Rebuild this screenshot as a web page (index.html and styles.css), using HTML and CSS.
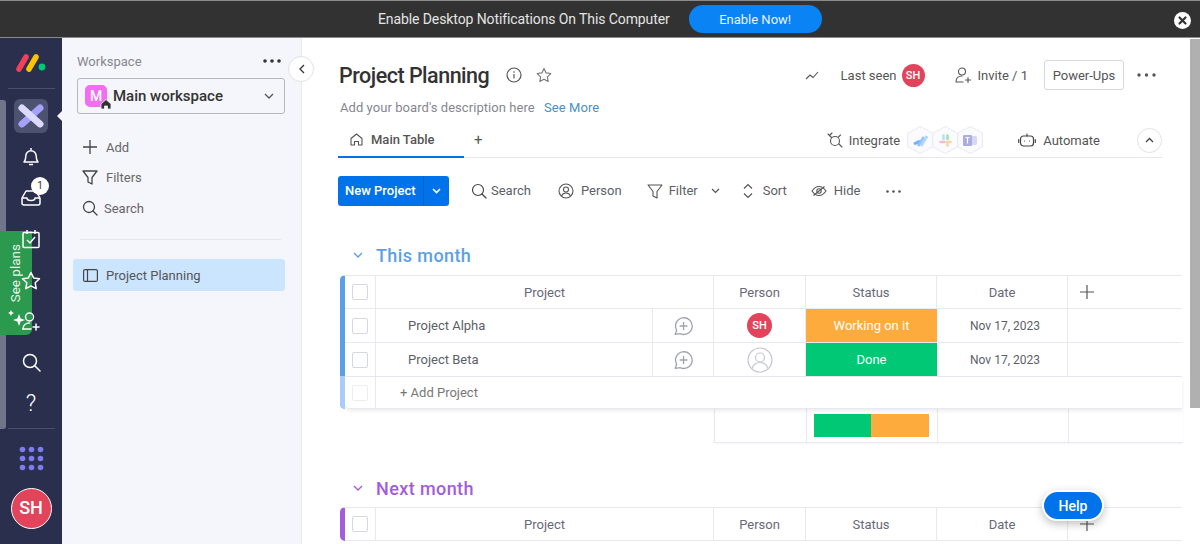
FILE: index.html
```html
<!DOCTYPE html>
<html lang="en">
<head>
    <meta charset="UTF-8">
    <meta name="viewport" content="width=device-width, initial-scale=1.0">
    <title>Project Planning</title>
    <link rel="stylesheet" href="styles.css">
</head>
<body>
    <div class="banner">
        <span class="banner-text">Enable Desktop Notifications On This Computer</span>
        <button class="banner-btn">Enable Now!</button>
        <span class="banner-close">
            <svg width="17" height="17" viewBox="0 0 17 17"><circle cx="8.5" cy="8.5" r="8.5" fill="#fff"/><path d="M5.5 5.5l6 6M11.5 5.5l-6 6" stroke="#333" stroke-width="2.2" stroke-linecap="round"/></svg>
        </span>
    </div>

    <div class="app">
        <!-- left rail -->
        <nav class="rail">
            <div class="rail-scroll"></div>
            <div class="see-plans">
                <span class="see-plans-text">See plans</span>
                <svg class="see-plans-spark" width="22" height="20" viewBox="0 0 22 20" fill="#fff"><path d="M12 5l1.600 4.400L18 11l-4.400 1.600L12 17l-1.600-4.400L6 11l4.400-1.600z"/><path d="M4 1l.9 2.100L7 4l-2.100.9L4 7l-.9-2.100L1 4l2.100-.9z"/></svg>
            </div>
            <svg class="rail-logo" width="30" height="18" viewBox="0 0 30 18">
                <path d="M3 15L10 3" stroke="#f2405b" stroke-width="5.500" stroke-linecap="round"/>
                <path d="M13 15L20 3" stroke="#fbc400" stroke-width="5.500" stroke-linecap="round"/>
                <circle cx="26" cy="13" r="3.400" fill="#00c875"/>
            </svg>
            <div class="rail-line"></div>
            <div class="rail-icons">
                <a class="rail-item rail-active">
                    <svg width="28" height="26" viewBox="0 0 28 26" fill="none" stroke-width="7" stroke-linecap="round"><path d="M23 5L5 21" stroke="#a5a2ff"/><path d="M5 5l18 16" stroke="#dcdbff"/></svg>
                </a>
                <a class="rail-item">
                    <svg width="18" height="20" viewBox="0 0 18 20" fill="none" stroke="#fff" stroke-width="1.500"><path d="M2 15c1.500-1.500 1.800-3 1.800-6a5.200 5.200 0 0 1 10.400 0c0 3 .3 4.500 1.800 6z" stroke-linejoin="round"/><path d="M7 17.500h4M9 1v2"/></svg>
                </a>
                <a class="rail-item">
                    <svg width="20" height="16" viewBox="0 0 20 16" fill="none" stroke="#fff" stroke-width="1.500" stroke-linejoin="round"><path d="M5 1h10l4 7v5a2 2 0 0 1-2 2H3a2 2 0 0 1-2-2V8z"/><path d="M1 8h5c0 1.500 1.500 2.500 4 2.500S14 9.500 14 8h5"/></svg>
                    <span class="rail-badge">1</span>
                </a>
                <a class="rail-item">
                    <svg width="20" height="20" viewBox="0 0 20 20" fill="none" stroke="#fff" stroke-width="1.500"><rect x="2" y="3.500" width="16" height="15" rx="1"/><path d="M6 1v4M14 1v4M6 11l3 3 5-6"/></svg>
                </a>
                <a class="rail-item">
                    <svg width="20" height="19" viewBox="0 0 20 19" fill="none" stroke="#fff" stroke-width="1.500" stroke-linejoin="round"><path d="M10 1.500l2.600 5.400 5.900.8-4.300 4.100 1 5.900-5.200-2.800-5.200 2.800 1-5.900L1.500 7.700l5.900-.8z"/></svg>
                </a>
                <a class="rail-item">
                    <svg width="20" height="20" viewBox="0 0 20 20" fill="none" stroke="#fff" stroke-width="1.500" stroke-linecap="round"><circle cx="8.500" cy="6" r="4"/><path d="M2 18c0-4 3-6 6.500-6"/><path d="M2 18h8M15 13v6M12 16h6"/></svg>
                </a>
                <a class="rail-item">
                    <svg width="19" height="19" viewBox="0 0 19 19" fill="none" stroke="#fff" stroke-width="1.500" stroke-linecap="round"><circle cx="8" cy="8" r="6.500"/><path d="M13 13l5 5"/></svg>
                </a>
                <a class="rail-item rail-help">?</a>
            </div>
            <div class="rail-line rail-line-low"></div>
            <svg class="rail-dots" width="25" height="25" viewBox="0 0 25 25" fill="#7e7bf0">
                <circle cx="3.500" cy="3.500" r="2.800"/><circle cx="12.500" cy="3.500" r="2.800"/><circle cx="21.500" cy="3.500" r="2.800"/>
                <circle cx="3.500" cy="12.500" r="2.800"/><circle cx="12.500" cy="12.500" r="2.800"/><circle cx="21.500" cy="12.500" r="2.800"/>
                <circle cx="3.500" cy="21.500" r="2.800"/><circle cx="12.500" cy="21.500" r="2.800"/><circle cx="21.500" cy="21.500" r="2.800"/>
            </svg>
            <div class="rail-avatar">SH</div>
        </nav>

        <!-- workspace sidebar -->
        <aside class="sidebar">
            <div class="side-head">
                <span>Workspace</span>
                <svg class="side-dots" width="18" height="4" viewBox="0 0 18 4" fill="#333"><circle cx="2" cy="2" r="1.800"/><circle cx="9" cy="2" r="1.800"/><circle cx="16" cy="2" r="1.800"/></svg>
            </div>
            <div class="ws-select">
                <span class="ws-logo">M
                    <svg class="ws-home" width="12" height="12" viewBox="0 0 12 12"><path d="M1 6L6 1.500 11 6v5H7.500V8h-3v3H1z" fill="#333" stroke="#f5f6fb" stroke-width=".8"/></svg>
                </span>
                <span class="ws-name">Main workspace</span>
                <svg width="10" height="6" viewBox="0 0 10 6" fill="none" stroke="#555" stroke-width="1.300"><path d="M1 1l4 4 4-4"/></svg>
            </div>
            <ul class="side-menu">
                <li>
                    <svg width="16" height="16" viewBox="0 0 16 16" fill="none" stroke="#444" stroke-width="1.300"><path d="M8 1v14M1 8h14"/></svg>
                    <span>Add</span>
                </li>
                <li>
                    <svg width="16" height="16" viewBox="0 0 16 16" fill="none" stroke="#444" stroke-width="1.300" stroke-linejoin="round"><path d="M1 2h14L10 8.500V15l-4-2V8.500z"/></svg>
                    <span>Filters</span>
                </li>
                <li class="side-search">
                    <svg width="16" height="16" viewBox="0 0 16 16" fill="none" stroke="#444" stroke-width="1.300" stroke-linecap="round"><circle cx="7" cy="7" r="5.500"/><path d="M11 11l4 4"/></svg>
                    <span>Search</span>
                </li>
            </ul>
            <div class="side-line"></div>
            <div class="side-board">
                <svg width="15" height="13" viewBox="0 0 15 13" fill="none" stroke="#444" stroke-width="1.200"><rect x=".6" y=".6" width="13.800" height="11.800" rx="1.500"/><path d="M4.500 1v11"/></svg>
                <span>Project Planning</span>
            </div>
        </aside>

        <main class="board">
            <div class="board-top">
                <div class="title-left">
                    <h1>Project Planning</h1>
                    <svg width="16" height="16" viewBox="0 0 16 16" fill="none" stroke="#555" stroke-width="1.200"><circle cx="8" cy="8" r="7"/><path d="M8 7v4.500M8 4.300v1.400"/></svg>
                    <svg class="title-star" width="16" height="16" viewBox="0 0 20 19" fill="none" stroke="#777" stroke-width="1.400" stroke-linejoin="round"><path d="M10 1.500l2.600 5.400 5.900.8-4.300 4.100 1 5.900-5.200-2.800-5.200 2.800 1-5.900L1.500 7.700l5.900-.8z"/></svg>
                </div>
                <div class="title-right">
                    <svg class="trend" width="14" height="9" viewBox="0 0 14 9" fill="none" stroke="#555" stroke-width="1.100"><path d="M1 8l4-4 3 2.500L13 1"/></svg>
                    <span class="last-seen">Last seen</span>
                    <span class="avatar">SH</span>
                    <svg class="invite-icon" width="16" height="16" viewBox="0 0 16 16" fill="none" stroke="#555" stroke-width="1.100" stroke-linecap="round"><circle cx="7" cy="4.500" r="3.500"/><path d="M1 15c0-4 2.500-6 6-6M1 15h7M13 10.500v5M10.500 13h5"/></svg>
                    <span class="invite">Invite / 1</span>
                    <button class="power-ups">Power-Ups</button>
                    <svg class="more-dots" width="19" height="4" viewBox="0 0 19 4" fill="#555"><circle cx="2" cy="2" r="1.700"/><circle cx="9.500" cy="2" r="1.700"/><circle cx="17" cy="2" r="1.700"/></svg>
                </div>
            </div>
            <p class="desc">Add your board's description here <a>See More</a></p>

            <div class="tabs">
                <div class="tab-active">
                    <svg width="13" height="13" viewBox="0 0 13 13" fill="none" stroke="#555" stroke-width="1.100" stroke-linejoin="round"><path d="M1 5.500L6.500 1 12 5.500V12H8.500V8.500h-4V12H1z"/></svg>
                    <span>Main Table</span>
                </div>
                <span class="tab-add">+</span>
                <div class="tabs-right">
                    <svg width="16" height="16" viewBox="0 0 16 16" fill="none" stroke="#555" stroke-width="1.100" stroke-linecap="round"><circle cx="8" cy="9" r="4.500"/><path d="M1 2l3.500 3.500M5 1L3 3M12 12l3 3M11.500 5l2-2"/></svg>
                    <span class="integrate">Integrate</span>
                    <div class="hexes">
                        <span class="hex">
                            <svg width="15" height="15" viewBox="0 0 15 15" fill="none" stroke-width="3"><path d="M1 11l6-3" stroke="#2684ff"/><path d="M5 13l6-9" stroke="#5aa4ff"/><path d="M8 13l6-10" stroke="#8cc0ff"/></svg>
                        </span>
                        <span class="hex">
                            <svg width="13" height="13" viewBox="0 0 13 13" stroke-width="2.600" stroke-linecap="round"><path d="M4.500 1.500v3.500" stroke="#8ed3ee"/><path d="M8.500 1.500v3.500" stroke="#6fcf97"/><path d="M1.500 8h4" stroke="#ef9ab5"/><path d="M8.500 8h3" stroke="#efc46f"/><path d="M8.500 8v3.500" stroke="#efc46f"/></svg>
                        </span>
                        <span class="hex">
                            <svg width="15" height="13" viewBox="0 0 15 13"><rect x="6" y="2" width="8" height="9" rx="1.500" fill="#c3c7ee"/><rect x="0" y="1" width="9" height="11" rx="1" fill="#7f84cc"/><path d="M2.500 3.500h4M4.500 3.500v6" stroke="#fff" stroke-width="1.200"/></svg>
                        </span>
                    </div>
                    <svg class="robot" width="18" height="14" viewBox="0 0 18 14" fill="none" stroke="#444" stroke-width="1.200" stroke-linecap="round"><rect x="2.500" y="3" width="13" height="10" rx="3"/><path d="M.7 6.500v3M17.300 6.500v3M9 1v2M6.500 8h.01M11.500 8h.01"/></svg>
                    <span class="automate">Automate</span>
                    <span class="collapse-up">
                        <svg width="9" height="6" viewBox="0 0 9 6" fill="none" stroke="#444" stroke-width="1.300"><path d="M1 5l3.500-3.500L8 5"/></svg>
                    </span>
                </div>
            </div>

            <div class="toolbar">
                <div class="new-btn">
                    <span class="new-label">New Project</span>
                    <span class="new-arrow">
                        <svg width="9" height="6" viewBox="0 0 9 6" fill="none" stroke="#fff" stroke-width="1.600"><path d="M1 1l3.500 3.500L8 1"/></svg>
                    </span>
                </div>
                <span class="tool tool-search">
                    <svg width="16" height="16" viewBox="0 0 16 16" fill="none" stroke="#444" stroke-width="1.200" stroke-linecap="round"><circle cx="7" cy="7" r="5.500"/><path d="M11 11l4 4"/></svg>
                    Search
                </span>
                <span class="tool tool-person">
                    <svg width="16" height="16" viewBox="0 0 16 16" fill="none" stroke="#555" stroke-width="1.100"><circle cx="8" cy="8" r="7"/><circle cx="8" cy="6.500" r="2.500"/><path d="M3.500 13c.8-2 2.500-3 4.500-3s3.700 1 4.500 3"/></svg>
                    Person
                </span>
                <span class="tool tool-filter">
                    <svg width="16" height="16" viewBox="0 0 16 16" fill="none" stroke="#555" stroke-width="1.100" stroke-linejoin="round"><path d="M1 2h14L10 8.500V15l-4-2V8.500z"/></svg>
                    Filter
                </span>
                <svg class="tool-chevron" width="9" height="6" viewBox="0 0 9 6" fill="none" stroke="#555" stroke-width="1.200"><path d="M1 1l3.500 3.500L8 1"/></svg>
                <span class="tool tool-sort">
                    <svg width="10" height="16" viewBox="0 0 10 16" fill="none" stroke="#555" stroke-width="1.200"><path d="M1 5.500L5 1.500l4 4M1 10.500l4 4 4-4"/></svg>
                    Sort
                </span>
                <span class="tool tool-hide">
                    <svg width="16" height="12" viewBox="0 0 16 12" fill="none" stroke="#555" stroke-width="1.100"><path d="M1 6c2-3 4.500-4.500 7-4.500S13 3 15 6c-2 3-4.500 4.500-7 4.500S3 9 1 6z"/><circle cx="8" cy="6" r="2.200"/><path d="M2.500 10.500l11-9"/></svg>
                    Hide
                </span>
                <svg class="tool-dots" width="15" height="3" viewBox="0 0 15 3" fill="#555"><circle cx="1.500" cy="1.500" r="1.300"/><circle cx="7.500" cy="1.500" r="1.300"/><circle cx="13.500" cy="1.500" r="1.300"/></svg>
            </div>

            <section class="group group-blue">
                <h2 class="group-title">
                    <svg width="10" height="6" viewBox="0 0 10 6" fill="none" stroke="currentColor" stroke-width="1.400"><path d="M1 1l4 4 4-4"/></svg>
                    <span>This month</span>
                </h2>
                <div class="table-box">
                    <div class="row row-head">
                        <div class="cell"><i class="check"></i></div>
                        <div class="cell cell-wide">Project</div>
                        <div class="cell">Person</div>
                        <div class="cell">Status</div>
                        <div class="cell">Date</div>
                        <div class="cell cell-plus"><svg width="14" height="14" viewBox="0 0 14 14" stroke="#555" stroke-width="1.200"><path d="M7 0v14M0 7h14"/></svg></div>
                    </div>
                    <div class="row">
                        <div class="cell"><i class="check"></i></div>
                        <div class="cell cell-name">Project Alpha</div>
                        <div class="cell"><svg width="20" height="20" viewBox="0 0 18 18" fill="none" stroke="#a0a4b0" stroke-width="1.200"><path d="M2 16.500l1.300-3.700A7.500 7.500 0 1 1 6.500 15.800z" stroke-linejoin="round"/><path d="M9.500 5.500v7M6 9h7"/></svg></div>
                        <div class="cell"><span class="avatar">SH</span></div>
                        <div class="cell cell-status status-work">Working on it</div>
                        <div class="cell cell-date">Nov 17, 2023</div>
                        <div class="cell"></div>
                    </div>
                    <div class="row">
                        <div class="cell"><i class="check"></i></div>
                        <div class="cell cell-name">Project Beta</div>
                        <div class="cell"><svg width="20" height="20" viewBox="0 0 18 18" fill="none" stroke="#a0a4b0" stroke-width="1.200"><path d="M2 16.500l1.300-3.700A7.500 7.500 0 1 1 6.500 15.800z" stroke-linejoin="round"/><path d="M9.500 5.500v7M6 9h7"/></svg></div>
                        <div class="cell"><svg width="26" height="26" viewBox="0 0 26 26" fill="none" stroke="#c5c7d0" stroke-width="1.200"><circle cx="13" cy="13" r="12"/><circle cx="13" cy="10.500" r="4.500"/><path d="M5 21.500c1.500-4 4.500-6 8-6s6.500 2 8 6"/></svg></div>
                        <div class="cell cell-status status-done">Done</div>
                        <div class="cell cell-date">Nov 17, 2023</div>
                        <div class="cell"></div>
                    </div>
                    <div class="row row-add">
                        <div class="cell"><i class="check check-faint"></i></div>
                        <div class="cell cell-add">+ Add Project</div>
                    </div>
                </div>
                <div class="summary">
                    <div class="cell"></div>
                    <div class="cell"><div class="battery"><span class="bat-done"></span><span class="bat-work"></span></div></div>
                    <div class="cell"></div>
                    <div class="cell"></div>
                </div>
            </section>

            <section class="group group-purple">
                <h2 class="group-title">
                    <svg width="10" height="6" viewBox="0 0 10 6" fill="none" stroke="currentColor" stroke-width="1.400"><path d="M1 1l4 4 4-4"/></svg>
                    <span>Next month</span>
                </h2>
                <div class="table-box">
                    <div class="row row-head">
                        <div class="cell"><i class="check"></i></div>
                        <div class="cell cell-wide">Project</div>
                        <div class="cell">Person</div>
                        <div class="cell">Status</div>
                        <div class="cell">Date</div>
                        <div class="cell cell-plus"><svg width="14" height="14" viewBox="0 0 14 14" stroke="#555" stroke-width="1.200"><path d="M7 0v14M0 7h14"/></svg></div>
                    </div>
                </div>
            </section>
        </main>
    </div>

    <!-- floating stuff -->
    <button class="collapse-side">
        <svg width="7" height="10" viewBox="0 0 7 10" fill="none" stroke="#333" stroke-width="1.300"><path d="M6 1L2 5l4 4"/></svg>
    </button>
    <button class="help">Help</button>
    <div class="page-scroll"></div>
</body>
</html>
```

FILE: styles.css
```css
* {
    box-sizing: border-box;
}

html, body {
    margin: 0;
    height: 100%;
    overflow: hidden;
}

body {
    display: flex;
    flex-direction: column;
    font-family: Roboto, "Liberation Sans", sans-serif;
    font-size: 13px;
    color: #555;
    background: #fff;
}

/* top banner */
.banner {
    position: relative;
    flex: 0 0 38px;
    display: flex;
    align-items: center;
    padding-left: 378px;
    background: #323232;
    border-top: 1px solid #8a8a8a;
    border-bottom: 1px solid #8a8a8a;
    color: #e4e4e4;
}

.banner-text {
    font-size: 14px;
    letter-spacing: -0.1px;
}

.banner-btn {
    margin-left: 19px;
    width: 133px;
    height: 28px;
    border: none;
    border-radius: 14px;
    background: #0a84f5;
    color: #e8f3ff;
    font-family: inherit;
    font-size: 13px;
}

.banner-close {
    position: absolute;
    top: 11px;
    right: 9px;
    line-height: 0;
}

.app {
    flex: 1;
    display: flex;
    min-height: 0;
}

/* left rail */
.rail {
    position: relative;
    flex: 0 0 62px;
    display: flex;
    flex-direction: column;
    align-items: center;
    background: #292f4c;
}

.rail-scroll {
    position: absolute;
    left: 0;
    top: 62px;
    width: 6px;
    height: 329px;
    border-radius: 0 3px 3px 0;
    background: #72758a;
}

.see-plans {
    position: absolute;
    left: 0;
    top: 193px;
    width: 32px;
    height: 104px;
    border-radius: 0 0 6px 0;
    background: #2b9a4f;
    color: #e6f5ea;
}

.see-plans-text {
    position: absolute;
    left: 7px;
    top: 13px;
    writing-mode: vertical-rl;
    transform: rotate(180deg);
    font-size: 13.500px;
}

.see-plans-spark {
    position: absolute;
    left: 7px;
    top: 78px;
}

.rail-logo {
    margin-top: 16px;
}

.rail-line {
    width: 47px;
    height: 1px;
    margin-top: 16px;
    background: #4a4f6b;
}

.rail-icons {
    position: relative;
    z-index: 1;
    display: flex;
    flex-direction: column;
    align-items: center;
    margin-top: 10px;
    gap: 7px;
}

.rail-item {
    position: relative;
    display: flex;
    align-items: center;
    justify-content: center;
    width: 34px;
    height: 34px;
    border-radius: 6px;
}

.rail-active {
    background: #4d5270;
}

.rail-active::after {
    content: "";
    position: absolute;
    left: 43px;
    top: 12px;
    border: 5px solid transparent;
    border-left: none;
    border-right-color: #f5f6fb;
}

.rail-badge {
    position: absolute;
    top: -4px;
    right: -1px;
    width: 18px;
    height: 18px;
    border-radius: 50%;
    background: #fff;
    color: #333;
    font-size: 10px;
    line-height: 18px;
    text-align: center;
}

.rail-help {
    color: #fff;
    font-size: 23px;
    font-weight: 300;
}

.rail-line-low {
    margin-top: 8px;
}

.rail-dots {
    margin-top: 17px;
}

.rail-avatar {
    width: 41px;
    height: 41px;
    margin-top: 17px;
    border: 1.500px solid #fff;
    border-radius: 50%;
    background: #e2445c;
    color: #fff;
    font-size: 18px;
    font-weight: 500;
    line-height: 38px;
    text-align: center;
}

/* workspace sidebar */
.sidebar {
    flex: 0 0 240px;
    padding: 14px 16px 0 11px;
    background: #f5f6fb;
    border-right: 1px solid #e6e9ef;
}

.side-head {
    display: flex;
    justify-content: space-between;
    align-items: center;
    height: 18px;
    padding-left: 4px;
    color: #85878f;
}

.side-dots {
    margin-right: 4px;
}

.ws-select {
    display: flex;
    align-items: center;
    height: 36px;
    margin: 8px 0 0 4px;
    padding: 0 10px 0 7px;
    border: 1px solid #b5b7bf;
    border-radius: 3px;
}

.ws-logo {
    position: relative;
    flex: 0 0 22px;
    height: 22px;
    border-radius: 5px;
    background: #f36df0;
    color: #fff;
    font-size: 14px;
    font-weight: 500;
    line-height: 22px;
    text-align: center;
}

.ws-home {
    position: absolute;
    right: -5px;
    bottom: -3px;
}

.ws-name {
    flex: 1;
    margin-left: 6px;
    color: #333;
    font-size: 15px;
    font-weight: 500;
    white-space: nowrap;
}

.side-menu {
    margin: 18px 0 0;
    padding: 0 0 0 9px;
    list-style: none;
}

.side-menu li {
    display: flex;
    align-items: center;
    gap: 8px;
    height: 30px;
    color: #666;
}

.side-menu .side-search {
    gap: 6px;
    margin-top: 1px;
}

.side-line {
    height: 1px;
    margin: 16px 4px 0 7px;
    background: #e4e6ec;
}

.side-board {
    display: flex;
    align-items: center;
    gap: 8px;
    height: 32px;
    margin-top: 19px;
    padding-left: 10px;
    border-radius: 3px;
    background: #cce5ff;
    color: #555;
}

/* board */
.board {
    flex: 1;
    min-width: 0;
    padding: 22px 0 0 36px;
}

.board-top {
    display: flex;
    justify-content: space-between;
    align-items: center;
    height: 30px;
    padding-right: 44px;
}

.title-left, .title-right {
    display: flex;
    align-items: center;
}

h1 {
    margin: 0 17px 0 1px;
    color: #333;
    font-size: 21.500px;
    font-weight: 500;
    letter-spacing: -0.500px;
}

.title-star {
    margin-left: 14px;
}

.trend {
    margin-right: 22px;
}

.last-seen {
    margin-right: 5px;
    font-size: 13px;
}

.avatar {
    display: inline-block;
    width: 23px;
    height: 23px;
    border-radius: 50%;
    background: #e2445c;
    color: #fff;
    font-size: 11px;
    font-weight: 500;
    line-height: 23px;
    text-align: center;
}

.row .avatar {
    width: 25px;
    height: 25px;
    line-height: 25px;
}

.invite-icon {
    margin-left: 30px;
}

.invite {
    margin-left: 7px;
}

.power-ups {
    width: 80px;
    height: 30px;
    margin-left: 16px;
    border: 1px solid #d5d7de;
    border-radius: 3px;
    background: #fff;
    color: #555;
    font-family: inherit;
    font-size: 13px;
}

.more-dots {
    margin-left: 13px;
}

.desc {
    margin: 9px 0 0 2px;
    color: #85878f;
    font-size: 13px;
    line-height: 17px;
    letter-spacing: 0.060px;
}

.desc a {
    margin-left: 6px;
    color: #4a8fc7;
}

.tabs {
    display: flex;
    align-items: center;
    height: 35px;
    margin: 7px 37px 0 0;
    border-bottom: 1px solid #e6e9ef;
}

.tab-active {
    display: flex;
    align-items: center;
    gap: 8px;
    align-self: stretch;
    width: 126px;
    margin-bottom: -1px;
    padding-left: 12px;
    border-bottom: 2px solid #0073ea;
    font-weight: 500;
}

.tab-add {
    margin-left: 10px;
    font-size: 15px;
}

.tabs-right {
    display: flex;
    align-items: center;
    margin-left: auto;
    padding-right: 1px;
}

.integrate {
    margin-left: 6px;
}

.hexes {
    display: flex;
    margin: 0 36px 0 7px;
}

.hex {
    position: relative;
    display: flex;
    align-items: center;
    justify-content: center;
    width: 26px;
    height: 28px;
    margin-right: -1px;
    background: #e8eaf2;
    clip-path: polygon(50% 0, 100% 25%, 100% 75%, 50% 100%, 0 75%, 0 25%);
}

.hex::before {
    content: "";
    position: absolute;
    inset: 1px;
    background: #fbfbfe;
    clip-path: polygon(50% 0, 100% 25%, 100% 75%, 50% 100%, 0 75%, 0 25%);
}

.hex svg {
    position: relative;
    opacity: 0.65;
}

.automate {
    margin-left: 7px;
}

.collapse-up {
    display: flex;
    align-items: center;
    justify-content: center;
    width: 25px;
    height: 25px;
    margin-left: 37px;
    border: 1px solid #e0e2e8;
    border-radius: 50%;
}

/* toolbar */
.toolbar {
    display: flex;
    align-items: center;
    height: 30px;
    margin-top: 18px;
}

.new-btn {
    display: flex;
    width: 111px;
    height: 30px;
    border-radius: 3px;
    background: #0073ea;
    color: #fff;
    line-height: 30px;
}

.new-label {
    width: 86px;
    padding-left: 7px;
    border-right: 1px solid #0060c0;
    font-weight: 500;
    white-space: nowrap;
}

.new-arrow {
    flex: 1;
    display: flex;
    align-items: center;
    justify-content: center;
}

.tool {
    display: flex;
    align-items: center;
    gap: 5px;
    padding-bottom: 1px;
    color: #5c5f68;
}

.tool-search {
    margin-left: 22px;
    gap: 4px;
}

.tool-person {
    margin-left: 27px;
    gap: 7px;
}

.tool-filter {
    margin-left: 25px;
    gap: 6px;
}

.tool-chevron {
    margin-left: 13px;
}

.tool-sort {
    margin-left: 23px;
    gap: 10px;
}

.tool-hide {
    margin-left: 24px;
    gap: 7px;
}

.tool-dots {
    margin-left: 25px;
}

/* groups */
.group {
    margin-left: 2px;
}

.group-blue {
    margin-top: 37px;
    color: #5b9fe8;
}

.group-purple {
    margin-top: 33px;
    color: #a25ddc;
}

.group-title {
    display: flex;
    align-items: center;
    gap: 13px;
    height: 24px;
    margin: 0 0 8px 13px;
    font-size: 18px;
    font-weight: 500;
    letter-spacing: 0.400px;
}

.group-purple .group-title {
    margin-bottom: 7px;
}

.table-box {
    width: 842px;
    border-left: 5px solid currentColor;
    border-top: 1px solid #e6e9ef;
    border-radius: 5px 0 0 5px;
}

.row {
    display: grid;
    grid-template-columns: 31px 277px 61px 92px 131px 131px 115px;
    height: 34px;
    border-bottom: 1px solid #e6e9ef;
    color: #5c5f68;
}

.row-head {
    height: 33px;
    color: #676879;
}

.row-add {
    height: 32px;
    box-shadow: 0 2px 4px rgba(0, 0, 0, 0.08);
    border-radius: 0 0 0 5px;
}

.cell {
    display: flex;
    align-items: center;
    justify-content: center;
    border-right: 1px solid #e6e9ef;
}

.cell:last-child {
    border-right: none;
}

.cell-wide {
    grid-column: span 2;
}

.cell-name {
    justify-content: flex-start;
    padding-left: 32px;
}

.cell-add {
    grid-column: span 6;
    justify-content: flex-start;
    padding-left: 24px;
    color: #777;
    border-right: none;
}

.cell-plus {
    justify-content: flex-start;
    padding-left: 12px;
}

.cell-status {
    color: #fff;
    border-right: none;
}

.status-work {
    background: #fdab3d;
}

.status-done {
    background: #00c875;
}

.cell-date {
    padding-left: 6px;
    font-size: 12px;
}

.check {
    display: block;
    width: 16px;
    height: 16px;
    border: 1px solid #d5d7de;
    border-radius: 2px;
}

.check-faint {
    border-color: #eceef2;
}

.group-blue .table-box {
    position: relative;
}

.group-blue .table-box::after {
    content: "";
    position: absolute;
    left: -5px;
    bottom: 0;
    width: 5px;
    height: 33px;
    border-radius: 0 0 0 5px;
    background: #a9cdfb;
}

.summary {
    display: grid;
    grid-template-columns: 92px 131px 131px 115px;
    width: 469px;
    height: 34px;
    margin-left: 374px;
    border-left: 1px solid #e6e9ef;
    border-bottom: 1px solid #e6e9ef;
    box-shadow: 0 1px 2px rgba(0, 0, 0, 0.04);
}

.battery {
    display: flex;
    width: 115px;
    height: 23px;
    margin-right: 2px;
}

.bat-done {
    flex: 1;
    background: #00c875;
}

.bat-work {
    flex: 1;
    background: #fdab3d;
}

/* floating */
.collapse-side {
    position: absolute;
    left: 288px;
    top: 56px;
    display: flex;
    align-items: center;
    justify-content: center;
    width: 26px;
    height: 26px;
    padding: 0;
    border: 1px solid #e0e2e8;
    border-radius: 50%;
    background: #fff;
}

.help {
    position: absolute;
    left: 1042px;
    top: 490px;
    width: 62px;
    height: 31px;
    border: 2px solid #fff;
    border-radius: 16px;
    background: #0073ea;
    box-shadow: 0 3px 8px rgba(0, 0, 0, 0.25);
    color: #fff;
    font-family: inherit;
    font-size: 14px;
    font-weight: 500;
}

.page-scroll {
    position: absolute;
    left: 1190px;
    top: 39px;
    width: 10px;
    height: 369px;
    background: #b0b0b0;
}
```
